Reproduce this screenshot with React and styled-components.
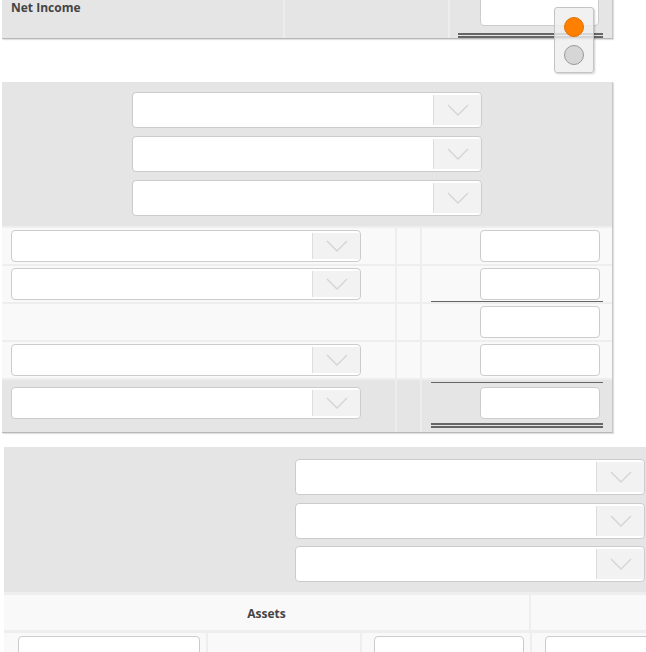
import React from "react";
import styled, { createGlobalStyle } from "styled-components";

const GlobalStyle = createGlobalStyle`
    html, body {
        margin: 0;
        padding: 0;
        background: #ffffff;
        overflow: hidden;
    }
    body {
        font-family: "Open Sans", "Liberation Sans", sans-serif;
        color: #444;
    }
`;

const Page = styled.div`
    position: relative;
    width: 646px;
    height: 652px;
    overflow: hidden;
`;

const Panel = styled.div`
    margin-left: ${(p) => p.$left}px;
    margin-top: ${(p) => p.$top}px;
    width: ${(p) => p.$width}px;
    background: #eeeeee;
    border-right: 1px solid #c8c8c8;
    border-bottom: 1px solid #b8b8b8;
    box-shadow: 1px 1px 1px rgba(0, 0, 0, 0.12);
    display: flex;
    flex-direction: column;
    gap: ${(p) => p.$gap ?? 2}px;
`;

const Row = styled.div`
    --fill: ${(p) => (p.$dark ? "#e5e5e5" : "#f9f9f9")};
    display: flex;
    height: ${(p) => p.$h}px;
    background: ${(p) => (p.$dark ? "#ededed" : "#eeeeee")};
    gap: 2px;
`;

const Cell = styled.div`
    width: ${(p) => (p.$w ? `${p.$w}px` : "auto")};
    flex: ${(p) => (p.$w ? "none" : "1")};
    display: flex;
    align-items: ${(p) => (p.$pt ? "flex-start" : "center")};
    padding-left: ${(p) => p.$pl || 0}px;
    padding-top: ${(p) => p.$pt || 0}px;
    box-sizing: border-box;
    background: var(--fill);
`;

const Label = styled.div`
    font-size: 12px;
    font-weight: 700;
    color: #444;
    align-self: flex-start;
    padding-top: ${(p) => p.$pt || 0}px;
`;

const HeadLabel = styled.div`
    font-size: 12px;
    font-weight: 700;
    color: #444;
    width: 100%;
    text-align: center;
    padding-top: 2px;
`;

const Header = styled.div`
    background: #e5e5e5;
    display: flex;
    flex-direction: column;
    align-items: ${(p) => p.$align || "center"};
    gap: ${(p) => p.$gap}px;
    padding: ${(p) => p.$pad};
`;

const SelectBox = styled.div`
    width: ${(p) => p.$w}px;
    height: ${(p) => p.$h}px;
    box-sizing: border-box;
    background: #ffffff;
    border: 1px solid #cccccc;
    border-radius: 4px;
    display: flex;
    justify-content: flex-end;
    overflow: hidden;
`;

const SelectButton = styled.div`
    width: 47px;
    margin: 2px 0;
    background: #f2f2f2;
    border-left: 1px solid #dddddd;
    display: flex;
    align-items: center;
    justify-content: center;
`;

const Input = styled.div`
    width: ${(p) => p.$w || 120}px;
    height: 32px;
    box-sizing: border-box;
    background: #ffffff;
    border: 1px solid #cccccc;
    border-radius: 4px;
    flex: none;
`;

const Amount = styled.div`
    flex: 1;
    align-self: ${(p) => (p.$over ? "flex-start" : "stretch")};
    margin: ${(p) => p.$margin || "0 9px"};
    padding: ${(p) => p.$pad || "0 3px 0 0"};
    display: flex;
    align-items: center;
    justify-content: flex-end;
    box-sizing: border-box;
    border-top: ${(p) => (p.$over ? "1px solid #666" : "none")};
    border-bottom: ${(p) =>
        p.$double ? "5px double #666" : p.$under ? "1px solid #666" : "none"};
`;

const Toggle = styled.div`
    position: absolute;
    left: 554px;
    top: 7px;
    width: 40px;
    height: 66px;
    box-sizing: border-box;
    background: rgba(238, 238, 238, 0.82);
    border: 1px solid #c4c4c4;
    border-radius: 3px;
    box-shadow: 1px 1px 2px rgba(0, 0, 0, 0.2);
    display: flex;
    flex-direction: column;
    align-items: center;
    gap: 8px;
    padding-top: 9px;
`;

const Dot = styled.div`
    width: 20px;
    height: 20px;
    box-sizing: border-box;
    border-radius: 50%;
    background: ${(p) => (p.$on ? "#ff8000" : "#d6d6d6")};
    border: 1px solid ${(p) => (p.$on ? "#e07000" : "#999999")};
`;

function Chevron() {
    return (
        <svg width="22" height="12" viewBox="0 0 22 12">
            <polyline points="1,1 11,11 21,1" fill="none" stroke="#d4d4d4" strokeWidth="1.4" />
        </svg>
    );
}

function Select({ w = 350, h = 36 }) {
    return (
        <SelectBox $w={w} $h={h}>
            <SelectButton>
                <Chevron />
            </SelectButton>
        </SelectBox>
    );
}

function LineRow({ select, dark, h = 36, under, over, double }) {
    return (
        <Row $h={h} $dark={dark}>
            <Cell $w={393} $pl={9} $pt={over ? 7 : 0}>
                {select && <Select h={32} />}
            </Cell>
            <Cell $w={23} />
            <Cell>
                <Amount
                    $under={under}
                    $over={over}
                    $double={double}
                    $margin={over ? "2px 9px 0" : "0 9px"}
                    $pad={over ? "4px 3px 4px 0" : "0 3px 0 0"}
                >
                    <Input />
                </Amount>
            </Cell>
        </Row>
    );
}

export default function App() {
    return (
        <Page>
            <GlobalStyle />

            <Panel $left={2} $top={-10} $width={610}>
                <Row $h={48} $dark>
                    <Cell $w={281} $pl={9}>
                        <Label $pt={9}>Net Income</Label>
                    </Cell>
                    <Cell $w={163} />
                    <Cell>
                        <Amount $margin="0 9px 0 8px" $pad="0 4px 3px 0" $double>
                            <Input $w={119} />
                        </Amount>
                    </Cell>
                </Row>
            </Panel>

            <Panel $left={2} $top={43} $width={610}>
                <Header $gap={8} $pad="10px 0">
                    <Select />
                    <Select />
                    <Select />
                </Header>
                <LineRow select />
                <LineRow select under />
                <LineRow />
                <LineRow select />
                <LineRow select dark h={52} over double />
            </Panel>

            <Panel $left={4} $top={14} $width={700} $gap={3}>
                <Header $gap={7.5} $align="flex-start" $pad="12px 0 10px 291px">
                    <Select />
                    <Select />
                    <Select />
                </Header>
                <Row $h={35}>
                    <Cell $w={525}>
                        <HeadLabel>Assets</HeadLabel>
                    </Cell>
                    <Cell />
                </Row>
                <Row $h={36}>
                    <Cell $w={202} $pl={14} $pt={3}>
                        <Input $w={182} />
                    </Cell>
                    <Cell $w={152} />
                    <Cell $w={168} $pl={12} $pt={3}>
                        <Input $w={150} />
                    </Cell>
                    <Cell $pl={13} $pt={3}>
                        <Input $w={150} />
                    </Cell>
                </Row>
            </Panel>

            <Toggle>
                <Dot $on />
                <Dot />
            </Toggle>
        </Page>
    );
}
